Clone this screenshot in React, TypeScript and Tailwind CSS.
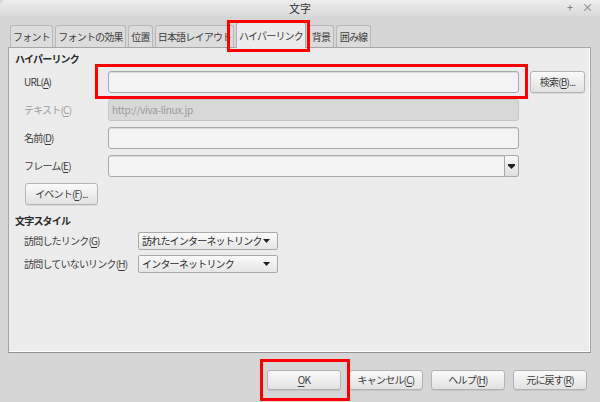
import type { ReactNode } from "react";

const tabs = [
  { label: "フォント", w: "w-[43px]" },
  { label: "フォントの効果", w: "w-[71px]" },
  { label: "位置", w: "w-[25px]" },
  { label: "日本語レイアウト", w: "w-[79px]" },
  { label: "ハイパーリンク", w: "w-[70px]" },
  { label: "背景", w: "w-[26px]" },
  { label: "囲み線", w: "w-[35px]" },
];
const active = "ハイパーリンク";

function Mn({ children }: { children: ReactNode }) {
  return <span className="underline underline-offset-2">{children}</span>;
}

function Button({ children, className = "" }: { children: ReactNode; className?: string }) {
  return (
    <div
      className={`flex items-center justify-center rounded-[3px] border border-[#b4b4b4] bg-gradient-to-b from-[#fafafa] to-[#e2e2e2] shadow-[0_1px_0_rgba(0,0,0,0.08)] text-[#3c3c3c] ${className}`}
    >
      {children}
    </div>
  );
}

function Field({ disabled = false, text = "", combo = false }: { disabled?: boolean; text?: string; combo?: boolean }) {
  return (
    <div className="flex h-[22px] w-[411px]">
      <div
        className={`flex flex-1 items-center px-[3px] border ${
          disabled
            ? "bg-[#d8d8d8] border-[#c6c6c6] text-[#9a9a9a] tracking-[-0.3px]"
            : "bg-[#f3f3f3] border-[#a9a9a9] shadow-[inset_0_1px_0_#dcdcdc]"
        } ${combo ? "rounded-l-[3px]" : "rounded-[3px]"}`}
      >
        {text}
      </div>
      {combo && (
        <div className="flex w-[14px] items-center justify-center rounded-r-[3px] border border-l-0 border-[#a9a9a9] bg-gradient-to-b from-[#f8f8f8] to-[#e0e0e0]">
          <svg width="7" height="5" viewBox="0 0 7 5">
            <path d="M0 0h7v1.5L3.5 5 0 1.5z" fill="#222" />
          </svg>
        </div>
      )}
    </div>
  );
}

function Select({ text }: { text: string }) {
  return (
    <div className="flex h-[18px] w-[140px] items-center justify-between rounded-[2px] border border-[#a9a9a9] bg-gradient-to-b from-[#fafafa] to-[#e6e6e6] pl-[3px] pr-[7px] text-[#2a2a2a]">
      <span>{text}</span>
      <svg width="7" height="4" viewBox="0 0 7 4">
        <path d="M0 0h7L3.5 4z" fill="#222" />
      </svg>
    </div>
  );
}

export default function App() {
  return (
    <div
      className="relative h-[402px] w-[600px] overflow-hidden whitespace-nowrap bg-[#d6d6d6] text-[10px] leading-none tracking-[-0.8px] text-[#3c3c3c]"
      style={{ fontFamily: '"Noto Sans CJK JP", "Noto Sans", sans-serif' }}
    >
      {/* title bar */}
      <div className="relative flex h-[16px] items-center justify-center rounded-tl-[6px] bg-gradient-to-b from-[#eeeeee] to-[#dadada]">
        <span className="text-[11px] tracking-normal text-[#333]">文字</span>
        <div className="absolute right-[7px] top-[2px] flex items-center gap-[9px] text-[11px] leading-none tracking-normal text-[#777]">
          <span>+</span>
          <span>×</span>
        </div>
      </div>

      {/* tabs */}
      <div className="flex h-[31px] items-end gap-[2px] pl-[10px]">
        {tabs.map((t) =>
          t.label === active ? (
            <div
              key={t.label}
              className={`relative -mb-px flex h-[26px] items-center justify-center rounded-t-[3px] border border-b-0 border-[#b0b0b0] bg-[#ececec] text-[#3c3c3c] ${t.w}`}
            >
              {t.label}
            </div>
          ) : (
            <div
              key={t.label}
              className={`flex h-[22px] items-center justify-center rounded-t-[3px] border border-b-0 border-[#b8b8b8] bg-[#dcdcdc] text-[#3c3c3c] ${t.w}`}
            >
              {t.label}
            </div>
          )
        )}
      </div>

      {/* panel */}
      <div className="mx-[8px] mr-[9px] h-[306px] border border-[#a6a6a6] border-b-[#909090] bg-[#ececec] shadow-[inset_-1px_-1px_0_#ffffff]">
        <div className="pl-[6px] pt-[6px]">
          <div className="font-bold text-[#2a2a2a]">ハイパーリンク</div>
          <div className="mt-[7px] flex flex-col gap-[6px] pl-[9px]">
            <div className="flex items-center">
              <div className="w-[84px]">
                URL(<Mn>A</Mn>)
              </div>
              <Field />
              <Button className="ml-[11px] h-[22px] w-[55px]">
                検索(<Mn>B</Mn>)...
              </Button>
            </div>
            <div className="flex items-center">
              <div className="w-[84px] text-[#9c9c9c]">
                テキスト(<Mn>C</Mn>)
              </div>
              <Field disabled text="http://viva-linux.jp" />
            </div>
            <div className="flex items-center">
              <div className="w-[84px]">
                名前(<Mn>D</Mn>)
              </div>
              <Field />
            </div>
            <div className="flex items-center">
              <div className="w-[84px]">
                フレーム(<Mn>E</Mn>)
              </div>
              <Field combo />
            </div>
            <Button className="ml-[1px] h-[22px] w-[73px]">
              イベント(<Mn>F</Mn>)...
            </Button>
          </div>

          <div className="mt-[11px] font-bold text-[#2a2a2a]">文字スタイル</div>
          <div className="mt-[6px] flex flex-col gap-[5px] pl-[9px]">
            <div className="flex items-center">
              <div className="w-[114px]">
                訪問したリンク(<Mn>G</Mn>)
              </div>
              <Select text="訪れたインターネットリンク" />
            </div>
            <div className="flex items-center">
              <div className="w-[114px]">
                訪問していないリンク(<Mn>H</Mn>)
              </div>
              <Select text="インターネットリンク" />
            </div>
          </div>
        </div>
      </div>

      {/* bottom buttons */}
      <div className="mt-[17px] flex justify-end gap-[8px] pr-[13px]">
        <Button className="h-[20px] w-[74px]">
          <Mn>O</Mn>K
        </Button>
        <Button className="h-[20px] w-[74px]">
          キャンセル(<Mn>C</Mn>)
        </Button>
        <Button className="h-[20px] w-[74px]">
          ヘルプ(<Mn>H</Mn>)
        </Button>
        <Button className="h-[20px] w-[74px]">
          元に戻す(<Mn>R</Mn>)
        </Button>
      </div>

      {/* red annotation boxes */}
      <div className="pointer-events-none absolute left-[227px] top-[20px] h-[32px] w-[83px] border-[3px] border-[#ff0000]" />
      <div className="pointer-events-none absolute left-[95px] top-[64px] h-[35px] w-[433px] border-[3px] border-[#ff0000]" />
      <div className="pointer-events-none absolute left-[260px] top-[359px] h-[42px] w-[90px] border-[3px] border-[#ff0000]" />
    </div>
  );
}
